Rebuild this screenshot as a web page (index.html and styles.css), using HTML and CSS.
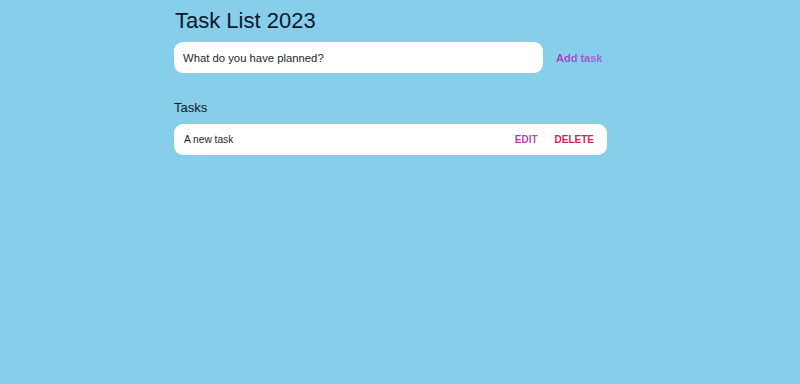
FILE: index.html
```html
<!DOCTYPE html>
<html lang="en">
<head>
<meta charset="utf-8">
<title>Task List 2023</title>
<link rel="stylesheet" href="styles.css">
</head>
<body>
<main class="app">
  <h1 class="title">Task List 2023</h1>
  <form class="new-task">
    <input class="new-task-input" type="text" value="What do you have planned?">
    <button class="add-btn" type="button"><span class="grad-text">Add task</span></button>
  </form>
  <h2 class="section-title">Tasks</h2>
  <div class="task-list">
    <div class="task">
      <span class="task-text">A new task</span>
      <div class="task-actions">
        <button class="edit-btn" type="button"><span class="grad-text edit">EDIT</span></button>
        <button class="delete-btn" type="button">DELETE</button>
      </div>
    </div>
  </div>
</main>
</body>
</html>
```
FILE: styles.css
```css
html, body {
  margin: 0;
  padding: 0;
  background: #87ceeb;
  font-family: "Liberation Sans", Arial, sans-serif;
  color: #0f172a;
}
.app {
  width: 433px;
  margin-left: 174px;
  padding-top: 8px;
}
.title {
  margin: 0;
  font-size: 22px;
  font-weight: 400;
  line-height: 25px;
  padding-left: 1px;
}
.new-task {
  display: flex;
  align-items: center;
  margin-top: 9px;
}
.new-task-input {
  width: 369px;
  height: 31px;
  box-sizing: border-box;
  border: none;
  outline: none;
  border-radius: 9px;
  background: #fff;
  padding: 0 9px;
  font-family: "Liberation Sans", Arial, sans-serif;
  font-size: 11.3px;
  color: #1a1f2b;
}
.add-btn {
  margin-left: 13px;
  padding: 0;
  border: none;
  background: none;
  font-family: "Liberation Sans", Arial, sans-serif;
  font-size: 11px;
  font-weight: 700;
  cursor: pointer;
}
.grad-text {
  background: linear-gradient(90deg, #c02bc0, #9466e6);
  -webkit-background-clip: text;
  background-clip: text;
  color: transparent;
}
.grad-text.edit {
  background: linear-gradient(90deg, #c92aa0, #9a55d0);
  -webkit-background-clip: text;
  background-clip: text;
}
.section-title {
  margin: 27px 0 0;
  font-size: 13px;
  font-weight: 400;
  line-height: 15px;
}
.task-list {
  margin-top: 9px;
}
.task {
  display: flex;
  align-items: center;
  justify-content: space-between;
  height: 31px;
  box-sizing: border-box;
  background: #fff;
  border-radius: 9px;
  padding: 0 13px 0 10px;
}
.task-text {
  font-size: 10.2px;
  color: #1a1f2b;
}
.task-actions {
  display: flex;
  gap: 17px;
}
.edit-btn, .delete-btn {
  padding: 0;
  border: none;
  background: none;
  font-family: "Liberation Sans", Arial, sans-serif;
  font-size: 10px;
  font-weight: 700;
  cursor: pointer;
}
.delete-btn {
  color: #d81f4c;
}
```
